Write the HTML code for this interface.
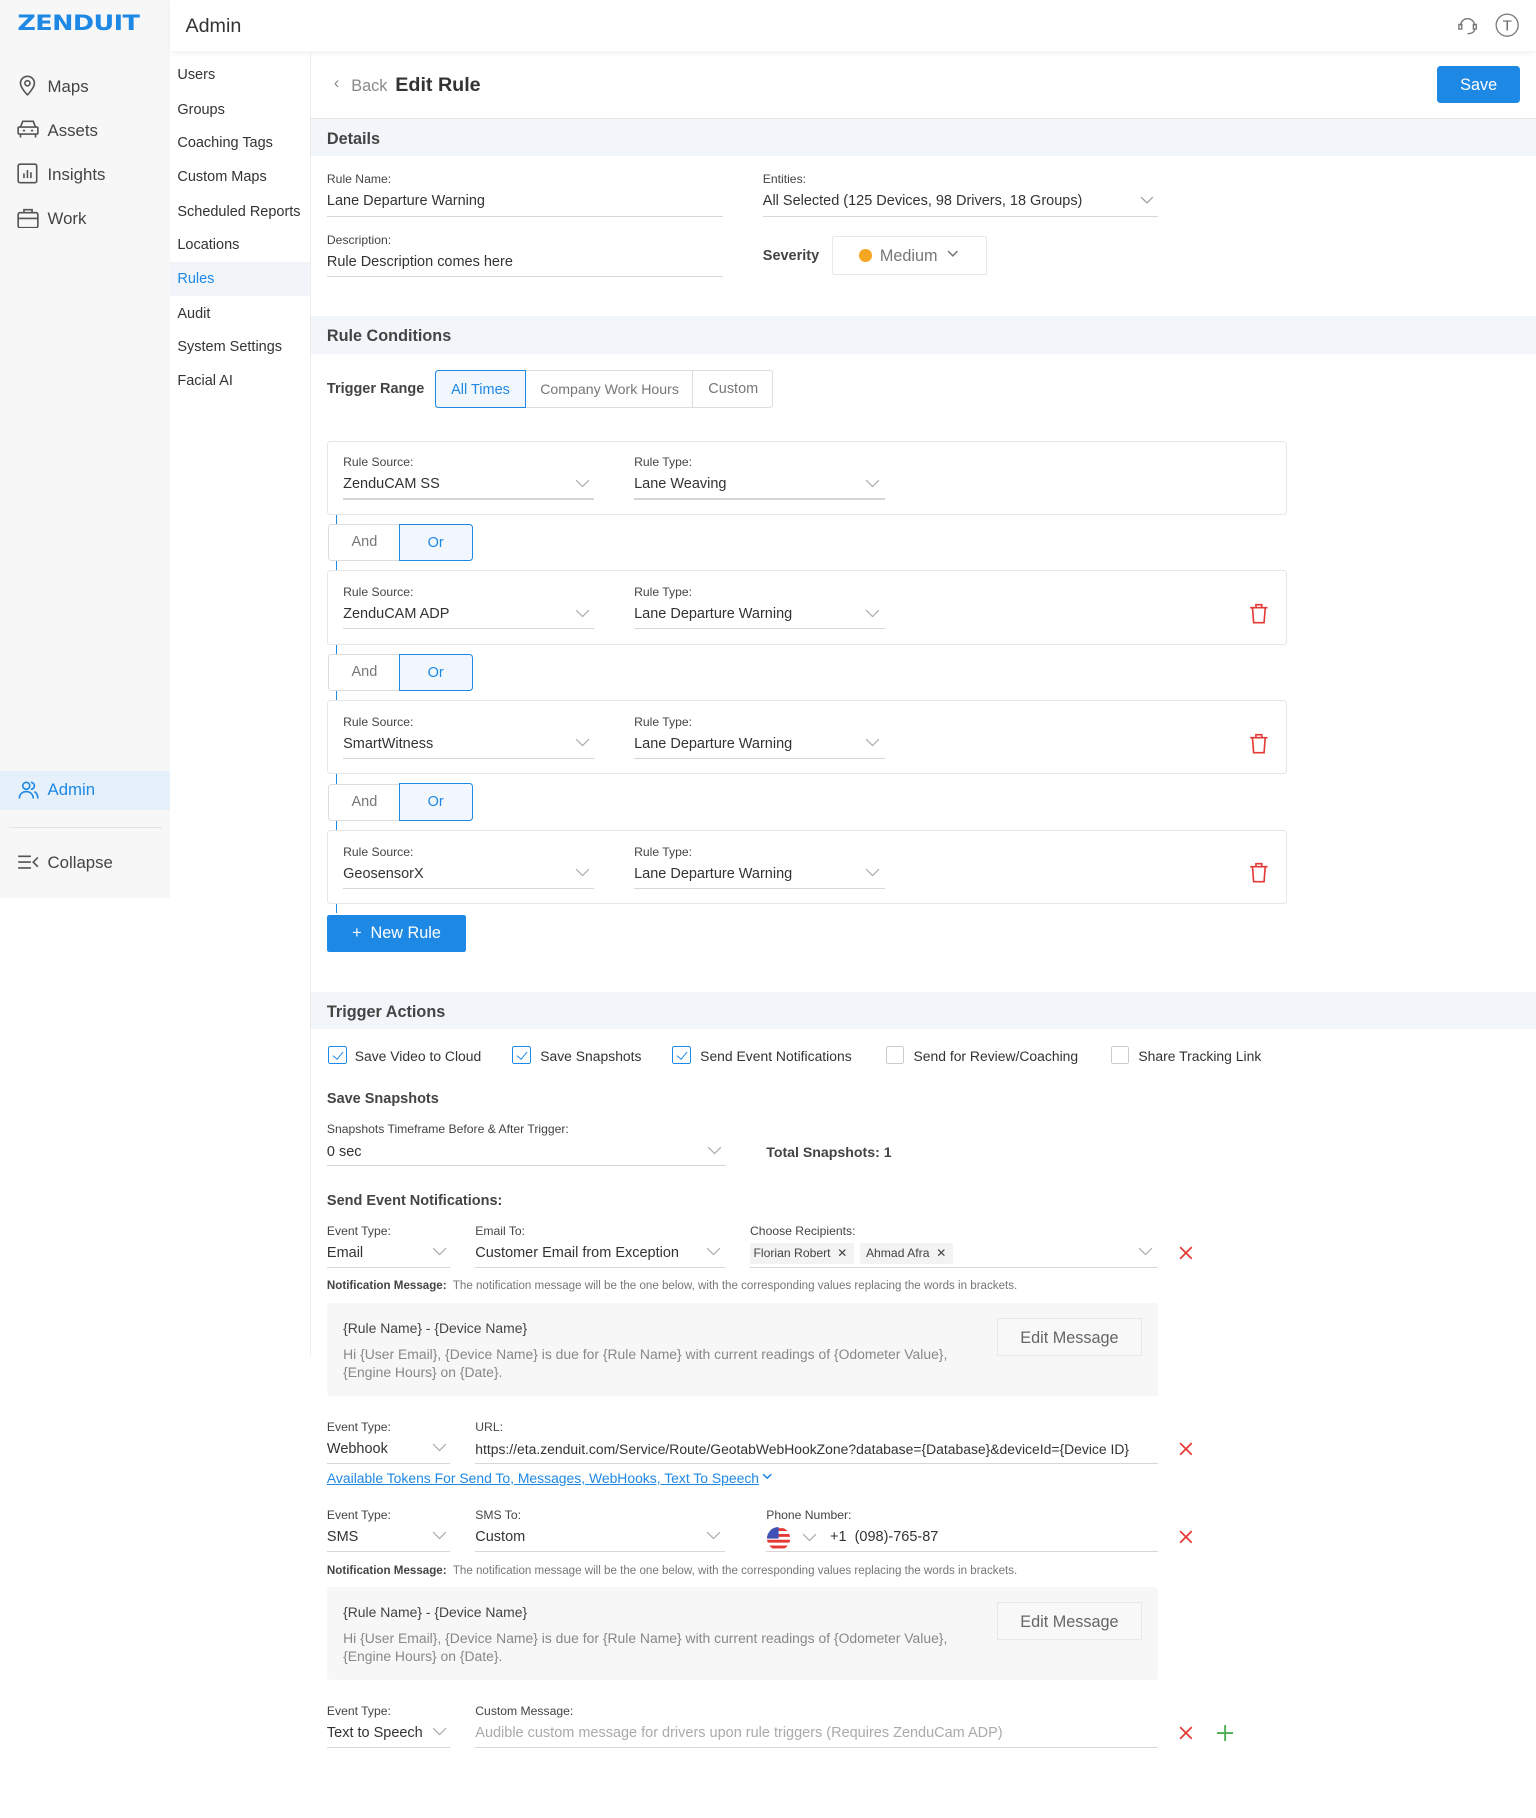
<!DOCTYPE html>
<html><head><meta charset="utf-8"><style>
*{box-sizing:border-box;margin:0;padding:0}
html,body{width:1536px;height:1818px;overflow:hidden;background:#fff}
#w{zoom:1.15925;position:relative;width:1325px;height:1568px;font-family:"Liberation Sans",Arial,sans-serif;color:#333}
.a{position:absolute;white-space:nowrap}
.t{position:absolute;white-space:nowrap;line-height:16px;margin-top:1px}
.lb{font-size:10.5px;color:#444}
.v{font-size:12.5px;color:#333}
.ul{position:absolute;height:1px;background:#d6d6d6}
.bar{position:absolute;left:268px;width:1057px;height:32px;background:#f2f6fa}
.bar span{position:absolute;left:14px;top:9px;font-size:14px;font-weight:bold;color:#444}
.sn{position:absolute;left:153px;font-size:12.5px;color:#333;line-height:16px;margin-top:1px}
.mn{position:absolute;left:41px;font-size:14.5px;color:#444;line-height:18px;margin-top:1px}
.card{position:absolute;left:282px;width:828px;height:64px;border:1px solid #e6e6e6;border-radius:3px;background:#fff}
.tg{position:absolute;left:283px;width:124px;height:32px;border:1px solid #ddd;border-radius:3px;font-size:12.5px}
.tg .and{position:absolute;left:0;top:0;width:61px;height:30px;line-height:31px;text-align:center;color:#777}
.tg .or{position:absolute;left:60px;top:-1px;width:64px;height:32px;line-height:32px;text-align:center;color:#1e88e5;border:1px solid #1e88e5;background:#f1f7fd;border-radius:0 3px 3px 0}
.vl{position:absolute;left:290px;width:1px;height:8px;background:#1e88e5}
.cb{position:absolute;top:902px;width:16px;height:16px;border:1px solid #ccc;border-radius:2px}
.cb.on{border-color:#1e88e5}
.cb.on:after{content:"";position:absolute;left:5px;top:2px;width:4px;height:8px;border:solid #1e88e5;border-width:0 1px 1px 0;transform:rotate(40deg)}
.ck{font-size:12px}
.box{position:absolute;left:282px;width:717px;height:80px;background:#f7f7f7;border-radius:3px}
.em{position:absolute;left:578px;top:13px;width:125px;height:33px;border:1px solid #e8e8e8;background:#f8f8f8;font-size:14px;color:#666;text-align:center;line-height:33px}
</style></head><body><div id="w">

<!-- sidebar -->
<div class="a" style="left:0;top:0;width:147px;height:775px;background:#f7f7f7"></div>
<div class="a" style="left:15px;top:7px;font-size:22px;font-weight:900;color:#1e88e5;letter-spacing:-0.5px;font-family:'DejaVu Sans',sans-serif;transform:scaleY(0.85);transform-origin:0 50%">ZENDUIT</div>
<div class="a" style="left:147px;top:0;width:1178px;height:44px;background:#fff;box-shadow:0 2px 4px rgba(0,0,0,0.05)"></div>
<div class="a" style="left:160px;top:13px;font-size:17px;color:#333">Admin</div>
<svg class="a" style="left:1256px;top:12px" width="20" height="20" viewBox="0 0 20 20" fill="none" stroke="#777" stroke-width="1.2"><path d="M4 10a6 6 0 0 1 12 0"/><rect x="2.5" y="9" width="2.5" height="4"/><rect x="15" y="9" width="2.5" height="4"/><path d="M16 13c0 3-3 4-6 4"/></svg>
<svg class="a" style="left:1290px;top:11px" width="21" height="21"><circle cx="10.5" cy="10.5" r="9.5" fill="none" stroke="#777" stroke-width="1.1"/><text x="10.5" y="15" text-anchor="middle" font-size="13" fill="#666" font-family="Liberation Sans">T</text></svg>

<svg class="a" style="left:15px;top:64px" width="18" height="20" viewBox="0 0 18 20" fill="none" stroke="#555" stroke-width="1.4"><path d="M9 18s-6-6-6-10a6 6 0 0 1 12 0c0 4-6 10-6 10z"/><circle cx="9" cy="8" r="2.2"/></svg>
<div class="mn" style="top:65px">Maps</div>
<svg class="a" style="left:15px;top:103px" width="19" height="17" viewBox="0 0 19 17" fill="none" stroke="#555" stroke-width="1.4"><path d="M3 7l2-5h9l2 5"/><rect x="1" y="7" width="17" height="6" rx="1"/><path d="M3 13v3M16 13v3M5 10h2M12 10h2"/></svg>
<div class="mn" style="top:103px">Assets</div>
<svg class="a" style="left:15px;top:141px" width="18" height="18" viewBox="0 0 18 18" fill="none" stroke="#555" stroke-width="1.4"><rect x="1" y="1" width="16" height="16" rx="1.5"/><path d="M6 13V9M9 13V6M12 13V8"/></svg>
<div class="mn" style="top:141px">Insights</div>
<svg class="a" style="left:15px;top:179px" width="19" height="18" viewBox="0 0 19 18" fill="none" stroke="#555" stroke-width="1.4"><rect x="1" y="4" width="17" height="13" rx="1.5"/><path d="M6 4V1.5h7V4M1 9h17"/></svg>
<div class="mn" style="top:179px">Work</div>

<div class="a" style="left:0;top:665px;width:147px;height:34px;background:#e6f0fa"></div>
<svg class="a" style="left:15px;top:673px" width="19" height="17" viewBox="0 0 19 17" fill="none" stroke="#1e88e5" stroke-width="1.4"><circle cx="8" cy="5" r="3"/><path d="M2 16c0-4 3-6 6-6s6 2 6 6M12 2a3 3 0 0 1 0 6M15 10c2 1 3 3 3 6"/></svg>
<div class="mn" style="top:672px;color:#1e88e5">Admin</div>
<div class="a" style="left:8px;top:713px;width:132px;height:1px;background:#e3e3e3"></div>
<svg class="a" style="left:15px;top:737px" width="19" height="14" viewBox="0 0 19 14" fill="none" stroke="#555" stroke-width="1.4"><path d="M1 2h11M1 7h11M1 12h11M18 3l-4 4 4 4"/></svg>
<div class="mn" style="top:735px">Collapse</div>

<!-- subnav -->
<div class="a" style="left:267px;top:44px;width:1px;height:1126px;background:#ececec"></div>
<div class="a" style="left:147px;top:226px;width:120px;height:29px;background:#f1f5fa"></div>
<div class="sn" style="top:56px">Users</div>
<div class="sn" style="top:86px">Groups</div>
<div class="sn" style="top:115px">Coaching Tags</div>
<div class="sn" style="top:144px">Custom Maps</div>
<div class="sn" style="top:174px">Scheduled Reports</div>
<div class="sn" style="top:203px">Locations</div>
<div class="sn" style="top:232px;color:#1e88e5">Rules</div>
<div class="sn" style="top:262px">Audit</div>
<div class="sn" style="top:291px">System Settings</div>
<div class="sn" style="top:320px">Facial AI</div>

<!-- top bar -->
<div class="a" style="left:288px;top:64px;font-size:14px;color:#888">&#8249;</div>
<div class="a" style="left:303px;top:66px;font-size:14px;color:#888">Back</div>
<div class="a" style="left:341px;top:64px;font-size:17px;font-weight:bold;color:#333">Edit Rule</div>
<div class="a" style="left:1240px;top:57px;width:71px;height:32px;background:#1e88e5;border-radius:3px;color:#fff;font-size:14px;text-align:center;line-height:33px">Save</div>
<div class="a" style="left:268px;top:102px;width:1057px;height:1px;background:#e6e6e6"></div>

<div class="bar" style="top:103px"><span>Details</span></div>
<div class="t lb" style="left:282px;top:146px">Rule Name:</div>
<div class="t v" style="left:282px;top:165px">Lane Departure Warning</div>
<div class="ul" style="left:282px;top:186px;width:342px"></div>
<div class="t lb" style="left:658px;top:146px">Entities:</div>
<div class="t v" style="left:658px;top:165px">All Selected (125 Devices, 98 Drivers, 18 Groups)</div>
<svg class="a" style="left:983px;top:169px" width="12" height="8"><path d="M1 1l5 5 5-5" fill="none" stroke="#999"/></svg>
<div class="ul" style="left:658px;top:186px;width:341px"></div>
<div class="t lb" style="left:282px;top:198px">Description:</div>
<div class="t v" style="left:282px;top:217px">Rule Description comes here</div>
<div class="ul" style="left:282px;top:238px;width:342px"></div>
<div class="t" style="left:658px;top:212px;font-size:12.5px;font-weight:bold;color:#444">Severity</div>
<div class="a" style="left:718px;top:204px;width:133px;height:33px;border:1px solid #e8e8e8;border-radius:2px"></div>
<div class="a" style="left:741px;top:215px;width:11px;height:11px;border-radius:50%;background:#f5a623"></div>
<div class="t" style="left:759px;top:212px;font-size:14px;color:#777">Medium</div>
<svg class="a" style="left:817px;top:216px" width="10" height="7"><path d="M1 1l4 4 4-4" fill="none" stroke="#777" stroke-width="1.3"/></svg>

<div class="bar" style="top:273px"><span>Rule Conditions</span></div>
<div class="t" style="left:282px;top:327px;font-size:12.5px;font-weight:bold;color:#444">Trigger Range</div>
<div class="a" style="left:375px;top:319px;width:292px;height:33px;border:1px solid #ddd;border-radius:3px"></div>
<div class="a" style="left:375px;top:319px;width:79px;height:33px;border:1px solid #1e88e5;background:#f1f7fd;border-radius:3px 0 0 3px;color:#1e88e5;font-size:12.5px;text-align:center;line-height:33px">All Times</div>
<div class="t" style="left:466px;top:327px;font-size:12.2px;color:#777">Company Work Hours</div>
<div class="a" style="left:597px;top:320px;width:1px;height:31px;background:#ddd"></div>
<div class="t" style="left:611px;top:327px;font-size:12.5px;color:#777">Custom</div>

<!-- cards -->
<div class="card" style="top:380px"></div>
<div class="card" style="top:492px"></div>
<div class="card" style="top:604px"></div>
<div class="card" style="top:716px"></div>

<div class="vl" style="top:444px"></div><div class="vl" style="top:484px"></div>
<div class="vl" style="top:556px"></div><div class="vl" style="top:596px"></div>
<div class="vl" style="top:668px"></div><div class="vl" style="top:708px"></div>
<div class="vl" style="top:780px"></div>
<div class="tg" style="top:452px"><div class="and">And</div><div class="or">Or</div></div>
<div class="tg" style="top:564px"><div class="and">And</div><div class="or">Or</div></div>
<div class="tg" style="top:676px"><div class="and">And</div><div class="or">Or</div></div>

<!-- card 1 -->
<div class="t lb" style="left:296px;top:390px">Rule Source:</div>
<div class="t v" style="left:296px;top:409px">ZenduCAM SS</div>
<svg class="a" style="left:496px;top:413px" width="13" height="8"><path d="M1 1l5.5 5.5L12 1" fill="none" stroke="#aaa"/></svg>
<div class="ul" style="left:296px;top:430px;width:216px"></div>
<div class="t lb" style="left:547px;top:390px">Rule Type:</div>
<div class="t v" style="left:547px;top:409px">Lane Weaving</div>
<svg class="a" style="left:746px;top:413px" width="13" height="8"><path d="M1 1l5.5 5.5L12 1" fill="none" stroke="#aaa"/></svg>
<div class="ul" style="left:547px;top:430px;width:216px"></div>
<!-- card 2 -->
<div class="t lb" style="left:296px;top:502px">Rule Source:</div>
<div class="t v" style="left:296px;top:521px">ZenduCAM ADP</div>
<svg class="a" style="left:496px;top:525px" width="13" height="8"><path d="M1 1l5.5 5.5L12 1" fill="none" stroke="#aaa"/></svg>
<div class="ul" style="left:296px;top:542px;width:216px"></div>
<div class="t lb" style="left:547px;top:502px">Rule Type:</div>
<div class="t v" style="left:547px;top:521px">Lane Departure Warning</div>
<svg class="a" style="left:746px;top:525px" width="13" height="8"><path d="M1 1l5.5 5.5L12 1" fill="none" stroke="#aaa"/></svg>
<div class="ul" style="left:547px;top:542px;width:216px"></div>
<svg class="a" style="left:1077px;top:520px" width="17" height="18" viewBox="0 0 17 18" fill="none" stroke="#e53935" stroke-width="1.4"><path d="M1 4h15M6 4V1.5h5V4M3 4l1 13h9l1-13"/></svg>
<!-- card 3 -->
<div class="t lb" style="left:296px;top:614px">Rule Source:</div>
<div class="t v" style="left:296px;top:633px">SmartWitness</div>
<svg class="a" style="left:496px;top:637px" width="13" height="8"><path d="M1 1l5.5 5.5L12 1" fill="none" stroke="#aaa"/></svg>
<div class="ul" style="left:296px;top:654px;width:216px"></div>
<div class="t lb" style="left:547px;top:614px">Rule Type:</div>
<div class="t v" style="left:547px;top:633px">Lane Departure Warning</div>
<svg class="a" style="left:746px;top:637px" width="13" height="8"><path d="M1 1l5.5 5.5L12 1" fill="none" stroke="#aaa"/></svg>
<div class="ul" style="left:547px;top:654px;width:216px"></div>
<svg class="a" style="left:1077px;top:632px" width="17" height="18" viewBox="0 0 17 18" fill="none" stroke="#e53935" stroke-width="1.4"><path d="M1 4h15M6 4V1.5h5V4M3 4l1 13h9l1-13"/></svg>
<!-- card 4 -->
<div class="t lb" style="left:296px;top:726px">Rule Source:</div>
<div class="t v" style="left:296px;top:745px">GeosensorX</div>
<svg class="a" style="left:496px;top:749px" width="13" height="8"><path d="M1 1l5.5 5.5L12 1" fill="none" stroke="#aaa"/></svg>
<div class="ul" style="left:296px;top:766px;width:216px"></div>
<div class="t lb" style="left:547px;top:726px">Rule Type:</div>
<div class="t v" style="left:547px;top:745px">Lane Departure Warning</div>
<svg class="a" style="left:746px;top:749px" width="13" height="8"><path d="M1 1l5.5 5.5L12 1" fill="none" stroke="#aaa"/></svg>
<div class="ul" style="left:547px;top:766px;width:216px"></div>
<svg class="a" style="left:1077px;top:744px" width="17" height="18" viewBox="0 0 17 18" fill="none" stroke="#e53935" stroke-width="1.4"><path d="M1 4h15M6 4V1.5h5V4M3 4l1 13h9l1-13"/></svg>

<div class="a" style="left:282px;top:789px;width:120px;height:32px;background:#1e88e5;border-radius:2px;color:#fff;font-size:14px;line-height:32px;text-align:center">+&nbsp; New Rule</div>

<div class="bar" style="top:856px"><span>Trigger Actions</span></div>
<div class="cb on" style="left:283px"></div><div class="t v ck" style="left:306px;top:902px">Save Video to Cloud</div>
<div class="cb on" style="left:442px"></div><div class="t v ck" style="left:466px;top:902px">Save Snapshots</div>
<div class="cb on" style="left:580px"></div><div class="t v ck" style="left:604px;top:902px">Send Event Notifications</div>
<div class="cb" style="left:764px"></div><div class="t v ck" style="left:788px;top:902px">Send for Review/Coaching</div>
<div class="cb" style="left:958px"></div><div class="t v ck" style="left:982px;top:902px">Share Tracking Link</div>

<div class="t" style="left:282px;top:939px;font-size:12.5px;font-weight:bold;color:#444">Save Snapshots</div>
<div class="t lb" style="left:282px;top:965px">Snapshots Timeframe Before &amp; After Trigger:</div>
<div class="t v" style="left:282px;top:985px">0 sec</div>
<svg class="a" style="left:610px;top:989px" width="13" height="8"><path d="M1 1l5.5 5.5L12 1" fill="none" stroke="#aaa"/></svg>
<div class="ul" style="left:282px;top:1005px;width:344px"></div>
<div class="t" style="left:661px;top:985px;font-size:12.2px;font-weight:bold;color:#444">Total Snapshots: 1</div>

<div class="t" style="left:282px;top:1027px;font-size:12.5px;font-weight:bold;color:#444">Send Event Notifications:</div>
<!-- email row -->
<div class="t lb" style="left:282px;top:1053px">Event Type:</div>
<div class="t v" style="left:282px;top:1072px">Email</div>
<svg class="a" style="left:373px;top:1076px" width="13" height="8"><path d="M1 1l5.5 5.5L12 1" fill="none" stroke="#aaa"/></svg>
<div class="ul" style="left:282px;top:1093px;width:106px"></div>
<div class="t lb" style="left:410px;top:1053px">Email To:</div>
<div class="t v" style="left:410px;top:1072px">Customer Email from Exception</div>
<svg class="a" style="left:609px;top:1076px" width="13" height="8"><path d="M1 1l5.5 5.5L12 1" fill="none" stroke="#aaa"/></svg>
<div class="ul" style="left:410px;top:1093px;width:215px"></div>
<div class="t lb" style="left:647px;top:1053px">Choose Recipients:</div>
<div class="a" style="left:647px;top:1072px;width:90px;height:18px;background:#f3f3f3;font-size:10.5px;line-height:18px;padding-left:3px;color:#444">Florian Robert &nbsp;✕</div>
<div class="a" style="left:742px;top:1072px;width:80px;height:18px;background:#f3f3f3;font-size:10.5px;line-height:18px;padding-left:5px;color:#444">Ahmad Afra &nbsp;✕</div>
<svg class="a" style="left:982px;top:1076px" width="13" height="8"><path d="M1 1l5.5 5.5L12 1" fill="none" stroke="#aaa"/></svg>
<div class="ul" style="left:647px;top:1093px;width:352px"></div>
<svg class="a" style="left:1017px;top:1075px" width="12" height="12"><path d="M1 1l10 10M11 1L1 11" stroke="#e53935" stroke-width="1.5"/></svg>

<div class="t" style="left:282px;top:1101px;font-size:10px;color:#444"><b>Notification Message:</b>&nbsp; <span style="color:#777">The notification message will be the one below, with the corresponding values replacing the words in brackets.</span></div>
<div class="box" style="top:1124px">
<div class="t" style="left:14px;top:13px;font-size:12px;color:#444">{Rule Name} - {Device Name}</div>
<div class="t" style="left:14px;top:35px;font-size:12px;color:#888">Hi {User Email}, {Device Name} is due for {Rule Name} with current readings of {Odometer Value},</div>
<div class="t" style="left:14px;top:51px;font-size:12px;color:#888">{Engine Hours} on {Date}.</div>
<div class="em">Edit Message</div>
</div>

<!-- webhook -->
<div class="t lb" style="left:282px;top:1222px">Event Type:</div>
<div class="t v" style="left:282px;top:1241px">Webhook</div>
<svg class="a" style="left:373px;top:1245px" width="13" height="8"><path d="M1 1l5.5 5.5L12 1" fill="none" stroke="#aaa"/></svg>
<div class="ul" style="left:282px;top:1262px;width:106px"></div>
<div class="t lb" style="left:410px;top:1222px">URL:</div>
<div class="t v" style="left:410px;top:1241px;font-size:12px">https://eta.zenduit.com/Service/Route/GeotabWebHookZone?database={Database}&amp;deviceId={Device ID}</div>
<div class="ul" style="left:410px;top:1262px;width:589px"></div>
<svg class="a" style="left:1017px;top:1244px" width="12" height="12"><path d="M1 1l10 10M11 1L1 11" stroke="#e53935" stroke-width="1.5"/></svg>
<div class="t" style="left:282px;top:1266px;font-size:12px;color:#1e88e5;text-decoration:underline">Available Tokens For Send To, Messages, WebHooks, Text To Speech</div>
<svg class="a" style="left:657px;top:1271px" width="9" height="6"><path d="M1 1l3.5 3.5L8 1" fill="none" stroke="#1e88e5" stroke-width="1.3"/></svg>

<!-- sms -->
<div class="t lb" style="left:282px;top:1298px">Event Type:</div>
<div class="t v" style="left:282px;top:1317px">SMS</div>
<svg class="a" style="left:373px;top:1321px" width="13" height="8"><path d="M1 1l5.5 5.5L12 1" fill="none" stroke="#aaa"/></svg>
<div class="ul" style="left:282px;top:1338px;width:106px"></div>
<div class="t lb" style="left:410px;top:1298px">SMS To:</div>
<div class="t v" style="left:410px;top:1317px">Custom</div>
<svg class="a" style="left:609px;top:1321px" width="13" height="8"><path d="M1 1l5.5 5.5L12 1" fill="none" stroke="#aaa"/></svg>
<div class="ul" style="left:410px;top:1338px;width:215px"></div>
<div class="t lb" style="left:661px;top:1298px">Phone Number:</div>
<svg class="a" style="left:662px;top:1317px" width="20" height="20" viewBox="0 0 20 20"><defs><clipPath id="c"><circle cx="10" cy="10" r="10"/></clipPath></defs><g clip-path="url(#c)"><rect width="20" height="20" fill="#fff"/><rect y="1" width="20" height="2.5" fill="#e53935"/><rect y="6" width="20" height="2.5" fill="#e53935"/><rect y="11" width="20" height="2.5" fill="#e53935"/><rect y="16" width="20" height="2.5" fill="#e53935"/><rect width="10" height="10" fill="#3f51b5"/></g></svg>
<svg class="a" style="left:692px;top:1322px" width="13" height="8"><path d="M1 1l5.5 5.5L12 1" fill="none" stroke="#aaa"/></svg>
<div class="t v" style="left:716px;top:1317px">+1 &nbsp;(098)-765-87</div>
<div class="ul" style="left:661px;top:1338px;width:338px"></div>
<svg class="a" style="left:1017px;top:1320px" width="12" height="12"><path d="M1 1l10 10M11 1L1 11" stroke="#e53935" stroke-width="1.5"/></svg>

<div class="t" style="left:282px;top:1346px;font-size:10px;color:#444"><b>Notification Message:</b>&nbsp; <span style="color:#777">The notification message will be the one below, with the corresponding values replacing the words in brackets.</span></div>
<div class="box" style="top:1369px">
<div class="t" style="left:14px;top:13px;font-size:12px;color:#444">{Rule Name} - {Device Name}</div>
<div class="t" style="left:14px;top:35px;font-size:12px;color:#888">Hi {User Email}, {Device Name} is due for {Rule Name} with current readings of {Odometer Value},</div>
<div class="t" style="left:14px;top:51px;font-size:12px;color:#888">{Engine Hours} on {Date}.</div>
<div class="em">Edit Message</div>
</div>

<!-- tts -->
<div class="t lb" style="left:282px;top:1467px">Event Type:</div>
<div class="t v" style="left:282px;top:1486px">Text to Speech</div>
<svg class="a" style="left:373px;top:1490px" width="13" height="8"><path d="M1 1l5.5 5.5L12 1" fill="none" stroke="#aaa"/></svg>
<div class="ul" style="left:282px;top:1507px;width:106px"></div>
<div class="t lb" style="left:410px;top:1467px">Custom Message:</div>
<div class="t v" style="left:410px;top:1486px;color:#aaa">Audible custom message for drivers upon rule triggers (Requires ZenduCam ADP)</div>
<div class="ul" style="left:410px;top:1507px;width:589px"></div>
<svg class="a" style="left:1017px;top:1489px" width="12" height="12"><path d="M1 1l10 10M11 1L1 11" stroke="#e53935" stroke-width="1.5"/></svg>
<svg class="a" style="left:1050px;top:1488px" width="14" height="14"><path d="M7 0v14M0 7h14" stroke="#4caf50" stroke-width="1.6"/></svg>

</div></body></html>
